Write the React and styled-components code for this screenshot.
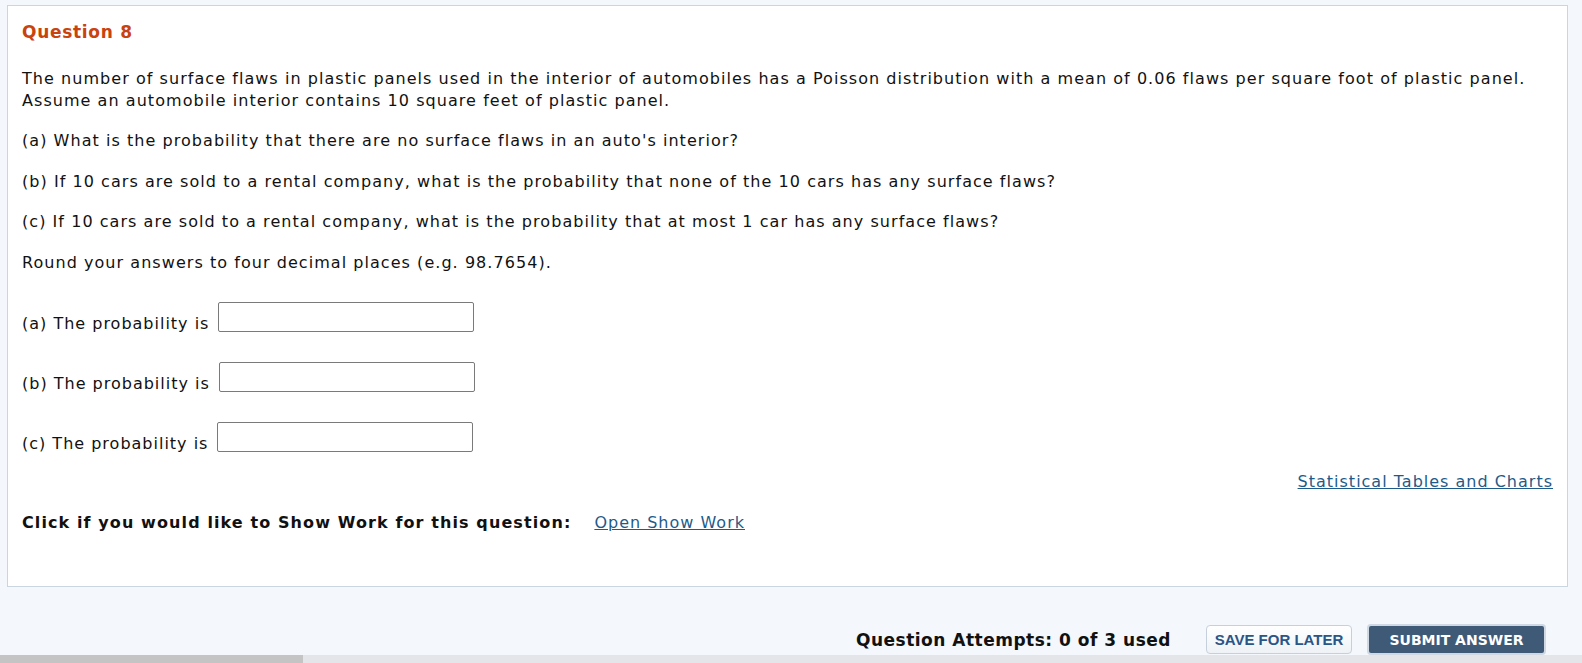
import React from 'react'
import styled, { createGlobalStyle } from 'styled-components'

const Global = createGlobalStyle`
  html, body {
    margin: 0;
    padding: 0;
    background: #f4f7fb;
    overflow: hidden;
  }
  body {
    font-family: "DejaVu Sans", Verdana, sans-serif;
    color: #111;
  }
`

const Page = styled.div`
  height: 100vh;
  overflow: hidden;
  display: flex;
  flex-direction: column;
  background: #f4f7fb;
`

const Card = styled.div`
  margin: 5px 14px 0 7px;
  background: #fff;
  border: 1px solid #cbd5e1;
  padding: 15px 14px 52px 14px;
`

const Title = styled.h2`
  margin: 0 0 25px;
  font-size: 17px;
  line-height: 22px;
  font-weight: bold;
  letter-spacing: 0.7px;
  color: #c9430e;
`

const Para = styled.p`
  margin: 0 0 ${p => p.$gap || 19}px;
  font-size: 16px;
  line-height: 22px;
  letter-spacing: 1.05px;
`

const AnswerRow = styled.div`
  display: flex;
  align-items: flex-end;
  gap: 9px;
  margin-bottom: ${p => p.$gap || 27}px;
  font-size: 16px;
  line-height: 22px;
  letter-spacing: 1px;
`

const Box = styled.input`
  width: 256px;
  height: 30px;
  box-sizing: border-box;
  margin: 0 0 3px;
  border: 1px solid #7a7a7a;
  border-radius: 2px;
  background: #fff;
  outline: none;
`

const LinkLine = styled.div`
  display: flex;
  justify-content: ${p => (p.$right ? 'flex-end' : 'flex-start')};
  align-items: center;
  gap: 23px;
  font-size: 16px;
  line-height: 22px;
  letter-spacing: 1px;
  margin-bottom: ${p => p.$gap || 0}px;
`

const Strong = styled.span`
  font-weight: bold;
  letter-spacing: 1.1px;
`

const Link = styled.a`
  color: #1e5b8a;
  text-decoration: underline;
  cursor: pointer;
`

const Footer = styled.div`
  flex: 1;
  display: flex;
  justify-content: flex-end;
  align-items: flex-end;
  padding: 0 36px 0 0;
`

const Attempts = styled.div`
  font-size: 17px;
  line-height: 22px;
  font-weight: bold;
  letter-spacing: 0.5px;
  margin: 0 35px 4px 0;
`

const Button = styled.button`
  font-weight: bold;
  border-radius: 4px;
  cursor: pointer;
  padding: 0;
  box-sizing: border-box;
  ${p =>
    p.$primary
      ? `
    font-family: "DejaVu Sans", Verdana, sans-serif;
    font-size: 14px;
    width: 179px;
    height: 31px;
    background: #3e5a77;
    color: #fff;
    border: 2px solid #cfd8e3;
    margin-left: 15px;
  `
      : `
    font-family: "Liberation Sans", Arial, sans-serif;
    font-size: 15px;
    width: 146px;
    height: 29px;
    margin-bottom: 1px;
    background: linear-gradient(#ffffff, #eef2f6);
    color: #2a5587;
    border: 1px solid #c6d0dc;
  `}
`

const Track = styled.div`
  height: 8px;
  flex-shrink: 0;
  background: #e3e5e8;
  display: flex;
`

const Thumb = styled.div`
  width: 303px;
  background: #c4c4c4;
`

export default function App() {
  return (
    <Page>
      <Global />
      <Card>
        <Title>Question 8</Title>
        <Para $gap={18}>
          The number of surface flaws in plastic panels used in the interior of automobiles has a Poisson distribution with a mean of 0.06 flaws per square foot of plastic panel.
          <br />
          Assume an automobile interior contains 10 square feet of plastic panel.
        </Para>
        <Para>(a) What is the probability that there are no surface flaws in an auto's interior?</Para>
        <Para $gap={18}>(b) If 10 cars are sold to a rental company, what is the probability that none of the 10 cars has any surface flaws?</Para>
        <Para>(c) If 10 cars are sold to a rental company, what is the probability that at most 1 car has any surface flaws?</Para>
        <Para $gap={28}>Round your answers to four decimal places (e.g. 98.7654).</Para>

        <AnswerRow>
          <span>(a) The probability is</span>
          <Box />
        </AnswerRow>
        <AnswerRow>
          <span>(b) The probability is</span>
          <Box />
        </AnswerRow>
        <AnswerRow $gap={16}>
          <span>(c) The probability is</span>
          <Box />
        </AnswerRow>

        <LinkLine $right $gap={19}>
          <Link>Statistical Tables and Charts</Link>
        </LinkLine>
        <LinkLine>
          <Strong>Click if you would like to Show Work for this question:</Strong>
          <Link>Open Show Work</Link>
        </LinkLine>
      </Card>
      <Footer>
        <Attempts>Question Attempts: 0 of 3 used</Attempts>
        <Button>SAVE FOR LATER</Button>
        <Button $primary>SUBMIT ANSWER</Button>
      </Footer>
      <Track>
        <Thumb />
      </Track>
    </Page>
  )
}
